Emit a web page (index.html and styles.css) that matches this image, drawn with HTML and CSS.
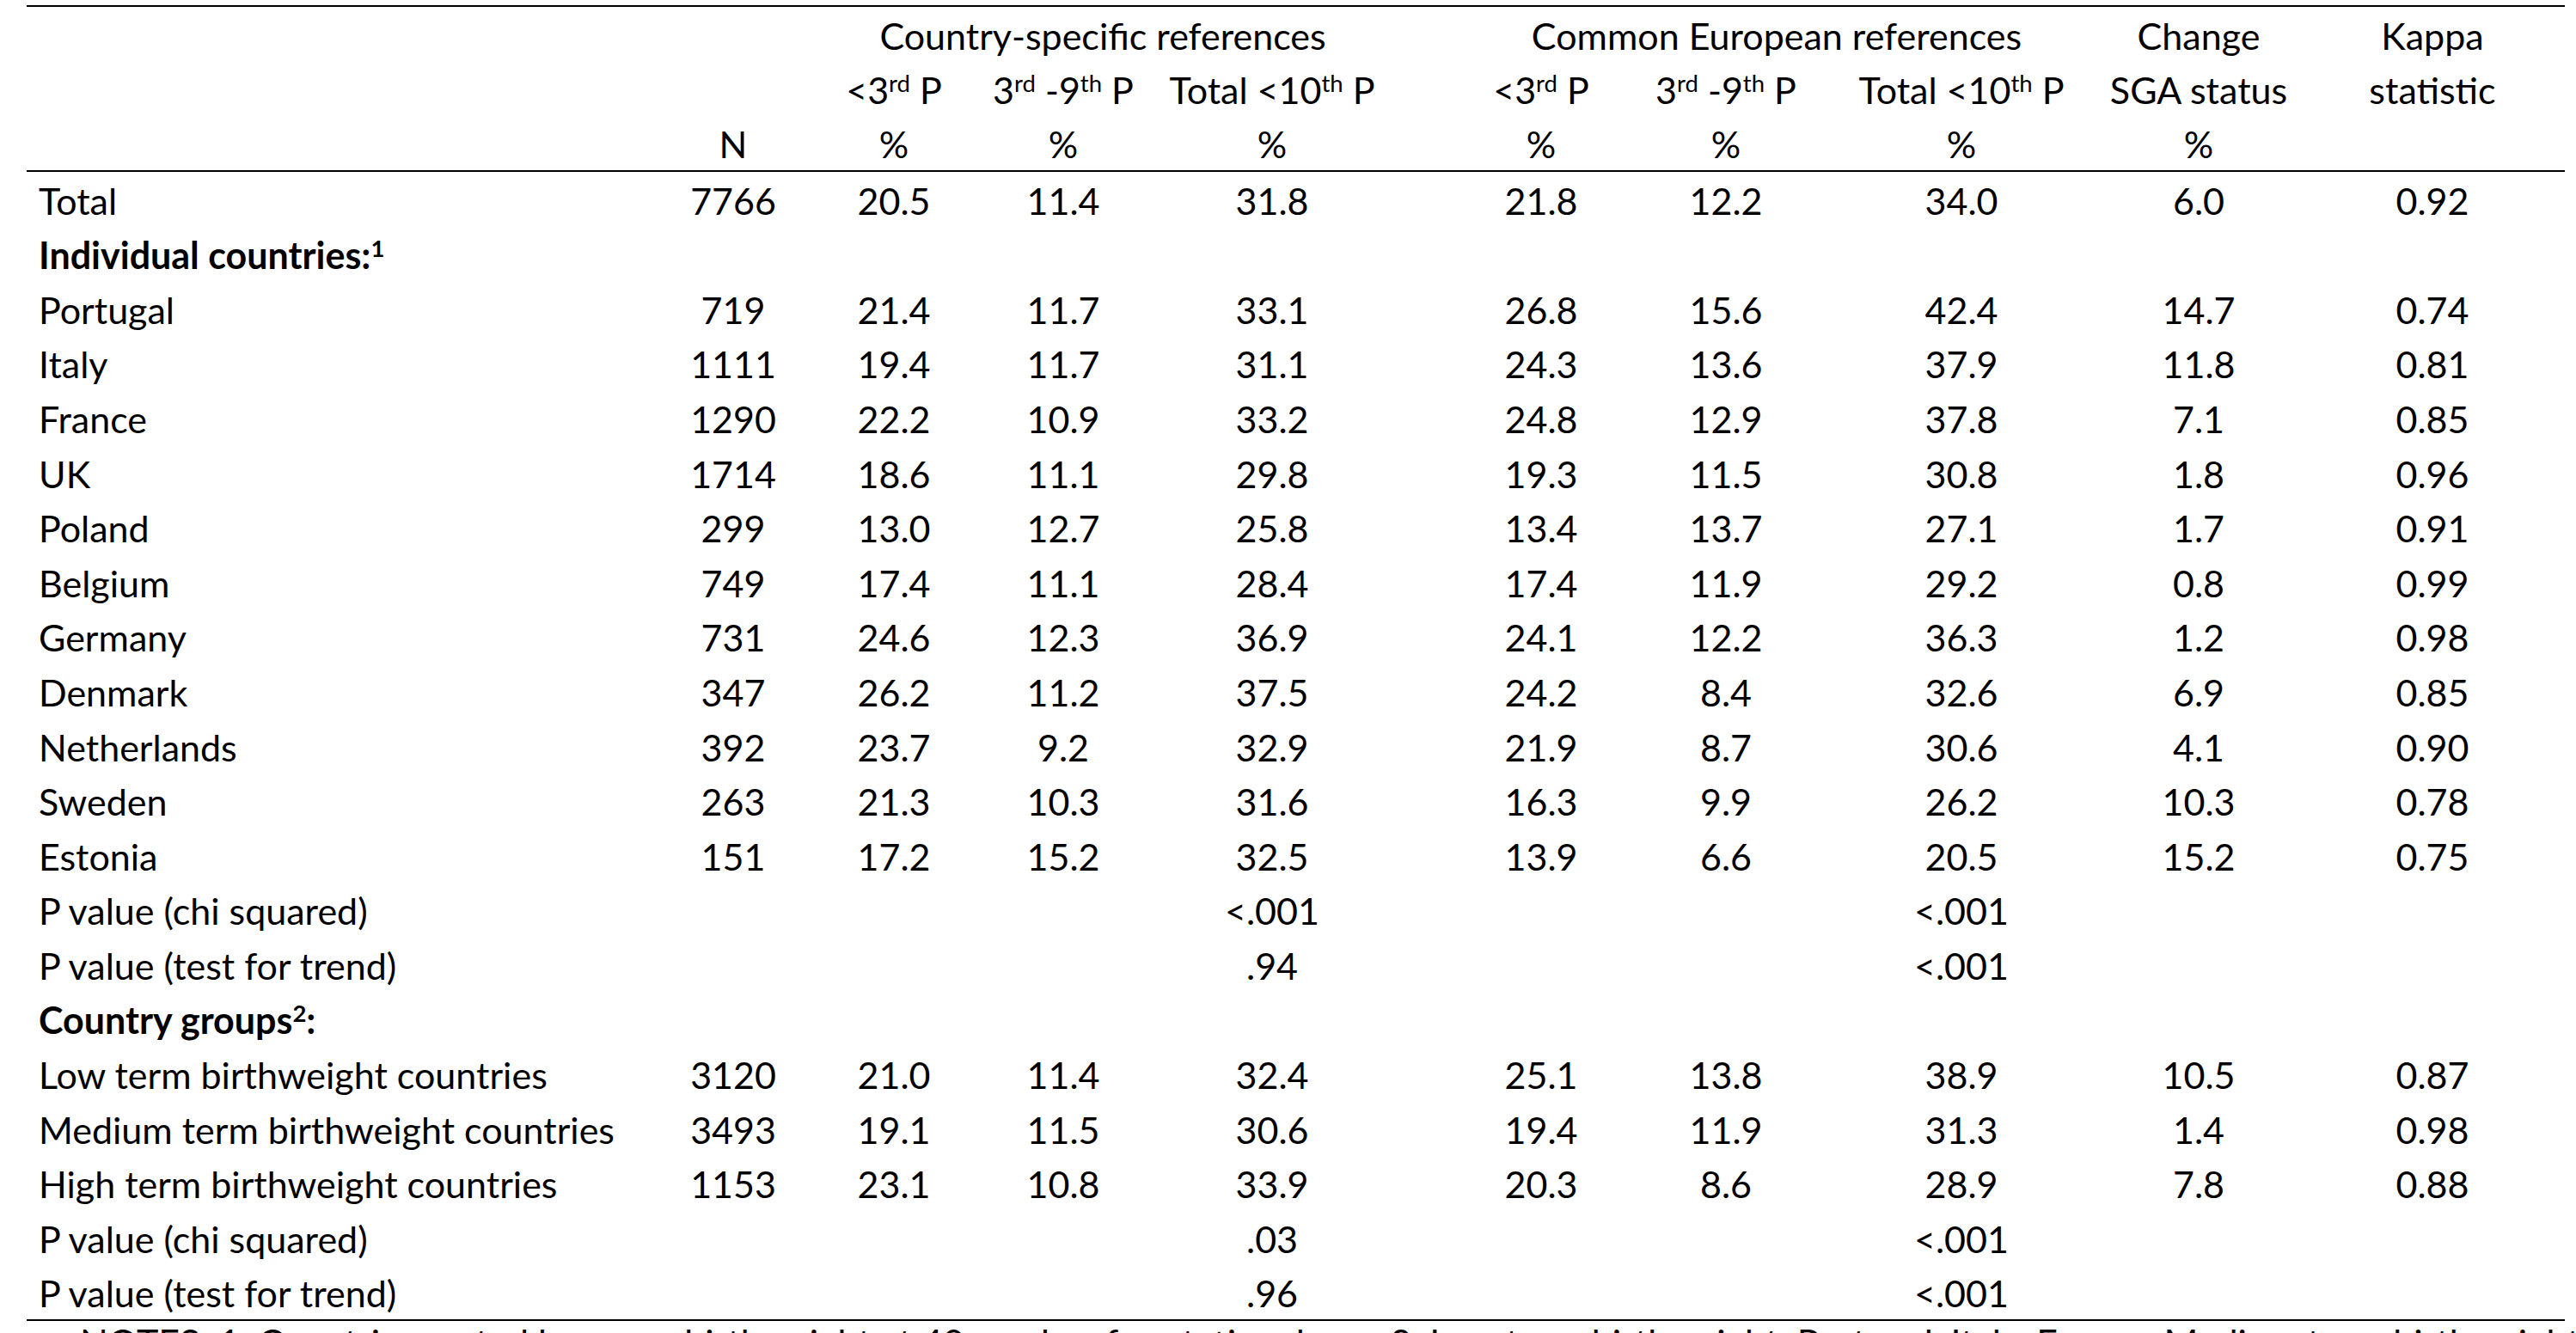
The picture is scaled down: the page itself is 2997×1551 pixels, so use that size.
FILE: index.html
```html
<!DOCTYPE html>
<html lang="en">
<head>
<meta charset="utf-8">
<title>SGA classification by country-specific and common European references</title>
<link rel="stylesheet" href="styles.css">
</head>
<body>
<div class="page">
  <div class="table">
    <div class="thead">
      <div class="row">
        <div class="c lab"></div>
        <div class="c"></div>
        <div class="c span3"><span>Country-specific references</span></div>
        <div class="c span3"><span>Common European references</span></div>
        <div class="c"><span>Change</span></div>
        <div class="c"><span>Kappa</span></div>
      </div>
      <div class="row">
        <div class="c lab"></div>
        <div class="c"></div>
        <div class="c"><span>&lt;3<sup>rd</sup> P</span></div>
        <div class="c"><span>3<sup>rd</sup> -9<sup>th</sup> P</span></div>
        <div class="c"><span>Total &lt;10<sup>th</sup> P</span></div>
        <div class="c"><span>&lt;3<sup>rd</sup> P</span></div>
        <div class="c"><span>3<sup>rd</sup> -9<sup>th</sup> P</span></div>
        <div class="c"><span>Total &lt;10<sup>th</sup> P</span></div>
        <div class="c"><span>SGA status</span></div>
        <div class="c"><span>statistic</span></div>
      </div>
      <div class="row">
        <div class="c lab"></div>
        <div class="c"><span>N</span></div>
        <div class="c"><span>%</span></div>
        <div class="c"><span>%</span></div>
        <div class="c"><span>%</span></div>
        <div class="c"><span>%</span></div>
        <div class="c"><span>%</span></div>
        <div class="c"><span>%</span></div>
        <div class="c"><span>%</span></div>
        <div class="c"></div>
      </div>
    </div>
    <div class="tbody">
      <div class="row"><div class="c lab">Total</div><div class="c">7766</div><div class="c">20.5</div><div class="c">11.4</div><div class="c">31.8</div><div class="c">21.8</div><div class="c">12.2</div><div class="c">34.0</div><div class="c">6.0</div><div class="c">0.92</div></div>
      <div class="row"><div class="c lab bold"><span>Individual countries:<sup>1</sup></span></div></div>
      <div class="row"><div class="c lab">Portugal</div><div class="c">719</div><div class="c">21.4</div><div class="c">11.7</div><div class="c">33.1</div><div class="c">26.8</div><div class="c">15.6</div><div class="c">42.4</div><div class="c">14.7</div><div class="c">0.74</div></div>
      <div class="row"><div class="c lab">Italy</div><div class="c">1111</div><div class="c">19.4</div><div class="c">11.7</div><div class="c">31.1</div><div class="c">24.3</div><div class="c">13.6</div><div class="c">37.9</div><div class="c">11.8</div><div class="c">0.81</div></div>
      <div class="row"><div class="c lab">France</div><div class="c">1290</div><div class="c">22.2</div><div class="c">10.9</div><div class="c">33.2</div><div class="c">24.8</div><div class="c">12.9</div><div class="c">37.8</div><div class="c">7.1</div><div class="c">0.85</div></div>
      <div class="row"><div class="c lab">UK</div><div class="c">1714</div><div class="c">18.6</div><div class="c">11.1</div><div class="c">29.8</div><div class="c">19.3</div><div class="c">11.5</div><div class="c">30.8</div><div class="c">1.8</div><div class="c">0.96</div></div>
      <div class="row"><div class="c lab">Poland</div><div class="c">299</div><div class="c">13.0</div><div class="c">12.7</div><div class="c">25.8</div><div class="c">13.4</div><div class="c">13.7</div><div class="c">27.1</div><div class="c">1.7</div><div class="c">0.91</div></div>
      <div class="row"><div class="c lab">Belgium</div><div class="c">749</div><div class="c">17.4</div><div class="c">11.1</div><div class="c">28.4</div><div class="c">17.4</div><div class="c">11.9</div><div class="c">29.2</div><div class="c">0.8</div><div class="c">0.99</div></div>
      <div class="row"><div class="c lab">Germany</div><div class="c">731</div><div class="c">24.6</div><div class="c">12.3</div><div class="c">36.9</div><div class="c">24.1</div><div class="c">12.2</div><div class="c">36.3</div><div class="c">1.2</div><div class="c">0.98</div></div>
      <div class="row"><div class="c lab">Denmark</div><div class="c">347</div><div class="c">26.2</div><div class="c">11.2</div><div class="c">37.5</div><div class="c">24.2</div><div class="c">8.4</div><div class="c">32.6</div><div class="c">6.9</div><div class="c">0.85</div></div>
      <div class="row"><div class="c lab">Netherlands</div><div class="c">392</div><div class="c">23.7</div><div class="c">9.2</div><div class="c">32.9</div><div class="c">21.9</div><div class="c">8.7</div><div class="c">30.6</div><div class="c">4.1</div><div class="c">0.90</div></div>
      <div class="row"><div class="c lab">Sweden</div><div class="c">263</div><div class="c">21.3</div><div class="c">10.3</div><div class="c">31.6</div><div class="c">16.3</div><div class="c">9.9</div><div class="c">26.2</div><div class="c">10.3</div><div class="c">0.78</div></div>
      <div class="row"><div class="c lab">Estonia</div><div class="c">151</div><div class="c">17.2</div><div class="c">15.2</div><div class="c">32.5</div><div class="c">13.9</div><div class="c">6.6</div><div class="c">20.5</div><div class="c">15.2</div><div class="c">0.75</div></div>
      <div class="row"><div class="c lab">P value (chi squared)</div><div class="c"></div><div class="c"></div><div class="c"></div><div class="c">&lt;.001</div><div class="c"></div><div class="c"></div><div class="c">&lt;.001</div></div>
      <div class="row"><div class="c lab">P value (test for trend)</div><div class="c"></div><div class="c"></div><div class="c"></div><div class="c">.94</div><div class="c"></div><div class="c"></div><div class="c">&lt;.001</div></div>
      <div class="row"><div class="c lab bold"><span>Country groups<sup>2</sup>:</span></div></div>
      <div class="row"><div class="c lab">Low term birthweight countries</div><div class="c">3120</div><div class="c">21.0</div><div class="c">11.4</div><div class="c">32.4</div><div class="c">25.1</div><div class="c">13.8</div><div class="c">38.9</div><div class="c">10.5</div><div class="c">0.87</div></div>
      <div class="row"><div class="c lab">Medium term birthweight countries</div><div class="c">3493</div><div class="c">19.1</div><div class="c">11.5</div><div class="c">30.6</div><div class="c">19.4</div><div class="c">11.9</div><div class="c">31.3</div><div class="c">1.4</div><div class="c">0.98</div></div>
      <div class="row"><div class="c lab">High term birthweight countries</div><div class="c">1153</div><div class="c">23.1</div><div class="c">10.8</div><div class="c">33.9</div><div class="c">20.3</div><div class="c">8.6</div><div class="c">28.9</div><div class="c">7.8</div><div class="c">0.88</div></div>
      <div class="row"><div class="c lab">P value (chi squared)</div><div class="c"></div><div class="c"></div><div class="c"></div><div class="c">.03</div><div class="c"></div><div class="c"></div><div class="c">&lt;.001</div></div>
      <div class="row"><div class="c lab">P value (test for trend)</div><div class="c"></div><div class="c"></div><div class="c"></div><div class="c">.96</div><div class="c"></div><div class="c"></div><div class="c">&lt;.001</div></div>
    </div>
  </div>
  <p class="notes">NOTES: 1. Countries sorted by mean birthweight at 40 weeks of gestational age; 2. Low term birthweight: Portugal, Italy, France; Medium term birthweight: UK, Poland, Belgium, Germany</p>
</div>
</body>
</html>
```

FILE: styles.css
```css
html, body {
  margin: 0;
  padding: 0;
  background: #ffffff;
}

body {
  font-family: Lato, "Liberation Sans", sans-serif;
  color: #000000;
  font-size: 43px;
  overflow: hidden;
}

.page {
  padding: 6px 0 0 31px;
}

.table {
  width: 2953px;
  border-top: 2px solid #000000;
  border-bottom: 2px solid #000000;
}

.thead {
  border-bottom: 2px solid #000000;
}

.row {
  display: grid;
  grid-template-columns: 803px 38px 336px 58px 428px 198px 232px 316px 236px 308px;
  height: 63.6px;
}

.thead .row {
  height: 63.2px;
}

.c {
  display: flex;
  justify-content: center;
  white-space: nowrap;
  padding-top: 4px;
  line-height: 59.6px;
}

.c.lab {
  justify-content: flex-start;
  padding-left: 14px;
}

.bold {
  font-weight: 700;
}

.span3 {
  grid-column: span 3;
}

sup {
  font-size: 0.64em;
  line-height: 0;
  vertical-align: baseline;
  position: relative;
  top: -0.52em;
}

.notes {
  margin: 0;
  padding-left: 62px;
  line-height: 50px;
  white-space: nowrap;
}
```
